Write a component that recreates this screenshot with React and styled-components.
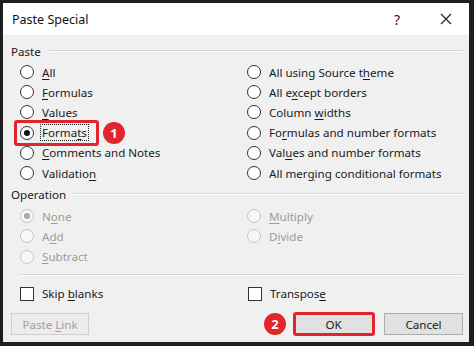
import styled, { createGlobalStyle } from "styled-components";

const GlobalStyle = createGlobalStyle`
  html, body {
    margin: 0;
    padding: 0;
    background: #222;
  }
  * {
    box-sizing: border-box;
  }
`;

const red = "#e0262c";
const uiFont = `"Noto Sans", "Open Sans", Arial, sans-serif`;

const Frame = styled.div`
  width: 474px;
  height: 346px;
  background: #1f1f1f;
  padding: 3px 5px 4px 3px;
`;

const Dialog = styled.div`
  width: 100%;
  height: 100%;
  background: #f0f0f0;
  display: flex;
  flex-direction: column;
  font-family: ${uiFont};
  font-size: 11.6px;
  color: #1a1a1a;
`;

const TitleBar = styled.div`
  height: 32px;
  background: #ffffff;
  display: flex;
  align-items: center;
  padding-left: 9px;
  padding-right: 17px;
`;

const Title = styled.div`
  flex: 1;
  font-size: 12.5px;
  color: #111;
`;

const Help = styled.div`
  font-size: 14px;
  margin-right: 40px;
  color: #222;
`;

const Body = styled.div`
  flex: 1;
  display: flex;
  flex-direction: column;
  padding: 8px 6px 7px 8px;
`;

const GroupHeader = styled.div`
  display: flex;
  align-items: center;
  height: 16px;
  gap: 8px;
  margin-top: ${(p) => p.$top || 0}px;
  margin-bottom: ${(p) => p.$bottom || 0}px;
`;

const Rule = styled.div`
  flex: ${(p) => (p.$standalone ? "none" : 1)};
  height: 2px;
  border-top: 1px solid #d7d7d7;
  border-bottom: 1px solid #ffffff;
  margin-top: ${(p) => p.$top || 0}px;
  margin-left: ${(p) => p.$left || 0}px;
`;

const OptionGrid = styled.div`
  display: grid;
  grid-template-columns: 227px 1fr;
  grid-auto-flow: column;
  grid-template-rows: repeat(${(p) => p.$rows}, 20.2px);
  padding-left: 9px;
`;

const OptionRow = styled.div`
  position: relative;
  display: flex;
  align-items: center;
  gap: 8px;
  color: ${(p) => (p.$disabled ? "#9c9c9c" : "#1a1a1a")};
`;

const RadioCircle = styled.span`
  width: 14px;
  height: 14px;
  border-radius: 50%;
  border: 1px solid ${(p) => (p.$disabled ? "#c4c4c4" : "#333")};
  background: ${(p) => (p.$disabled ? "#f7f7f7" : "#fff")};
  display: flex;
  align-items: center;
  justify-content: center;
  flex-shrink: 0;
  &::after {
    content: "";
    width: 6px;
    height: 6px;
    border-radius: 50%;
    background: ${(p) => (p.$disabled ? "#a8a8a8" : "#111")};
    display: ${(p) => (p.$checked ? "block" : "none")};
  }
`;

const Box = styled.span`
  width: 14px;
  height: 14px;
  border: 1px solid #333;
  background: #fff;
  flex-shrink: 0;
`;

const Label = styled.span`
  padding: 0 1px;
  margin-left: -1px;
  outline: ${(p) => (p.$focus ? "1px dotted #222" : "none")};
  line-height: 15px;
`;

const Key = styled.span`
  text-decoration: underline;
  text-underline-offset: 2px;
`;

const Highlight = styled.div`
  position: absolute;
  left: -6px;
  top: -3px;
  width: 85px;
  height: 26px;
  border: 3px solid ${red};
  border-radius: 3px;
  pointer-events: none;
`;

const Badge = styled.span`
  width: 22px;
  height: 22px;
  border-radius: 50%;
  background: ${red};
  color: #fff;
  font-weight: 700;
  font-size: 13px;
  display: flex;
  align-items: center;
  justify-content: center;
  flex-shrink: 0;
`;

const FloatingBadge = styled(Badge)`
  position: absolute;
  left: 83px;
  top: -1px;
`;

const CheckRow = styled.div`
  display: grid;
  grid-template-columns: 228px 1fr;
  padding-left: 9px;
  margin-top: 8px;
  height: 20px;
`;

const ButtonRow = styled.div`
  display: flex;
  align-items: center;
  margin-top: auto;
`;

const Button = styled.div`
  width: ${(p) => p.$w || 79}px;
  height: 22px;
  display: flex;
  align-items: center;
  justify-content: center;
  background: ${(p) => (p.$disabled ? "#ececec" : "#e1e1e1")};
  border: 1px solid ${(p) => (p.$primary ? "#0078d7" : p.$disabled ? "#cfcfcf" : "#adadad")};
  color: ${(p) => (p.$disabled ? "#a0a0a0" : "#1a1a1a")};
`;

const Spacer = styled.div`
  flex: 1;
`;

const OkWrap = styled.div`
  position: relative;
  margin-left: 8px;
  margin-right: 11px;
`;

const OkHighlight = styled.div`
  position: absolute;
  inset: -1px -2px -1px -1px;
  border: 3px solid ${red};
  border-radius: 3px;
`;

const CloseIcon = () => (
  <svg width="12" height="12" viewBox="0 0 12 12">
    <path d="M1 1 L11 11 M11 1 L1 11" stroke="#222" strokeWidth="1.2" />
  </svg>
);

const Radio = ({ checked, disabled, focus, highlight, children }) => (
  <OptionRow $disabled={disabled}>
    <RadioCircle $checked={checked} $disabled={disabled} />
    <Label $focus={focus}>{children}</Label>
    {highlight && (
      <>
        <Highlight />
        <FloatingBadge>1</FloatingBadge>
      </>
    )}
  </OptionRow>
);

const Check = ({ children }) => (
  <OptionRow>
    <Box />
    <Label>{children}</Label>
  </OptionRow>
);

export default function App() {
  return (
    <>
      <GlobalStyle />
      <Frame>
        <Dialog>
          <TitleBar>
            <Title>Paste Special</Title>
            <Help>?</Help>
            <CloseIcon />
          </TitleBar>
          <Body>
            <GroupHeader $bottom={3}>
              Paste
              <Rule />
            </GroupHeader>
            <OptionGrid $rows={6}>
              <Radio><Key>A</Key>ll</Radio>
              <Radio><Key>F</Key>ormulas</Radio>
              <Radio><Key>V</Key>alues</Radio>
              <Radio checked focus highlight>Forma<Key>t</Key>s</Radio>
              <Radio><Key>C</Key>omments and Notes</Radio>
              <Radio>Validatio<Key>n</Key></Radio>
              <Radio>All using Source t<Key>h</Key>eme</Radio>
              <Radio>All e<Key>x</Key>cept borders</Radio>
              <Radio>Column <Key>w</Key>idths</Radio>
              <Radio>Fo<Key>r</Key>mulas and number formats</Radio>
              <Radio>Val<Key>u</Key>es and number formats</Radio>
              <Radio>All mer<Key>g</Key>ing conditional formats</Radio>
            </OptionGrid>
            <GroupHeader $top={3} $bottom={4}>
              Operation
              <Rule />
            </GroupHeader>
            <OptionGrid $rows={3}>
              <Radio disabled checked>N<Key>o</Key>ne</Radio>
              <Radio disabled>A<Key>d</Key>d</Radio>
              <Radio disabled><Key>S</Key>ubtract</Radio>
              <Radio disabled><Key>M</Key>ultiply</Radio>
              <Radio disabled>D<Key>i</Key>vide</Radio>
            </OptionGrid>
            <Rule $standalone $top={7} $left={9} />
            <CheckRow>
              <Check>Skip <Key>b</Key>lanks</Check>
              <Check>Transpos<Key>e</Key></Check>
            </CheckRow>
            <ButtonRow>
              <Button $w={78} $disabled>
                <span>Paste <Key>L</Key>ink</span>
              </Button>
              <Spacer />
              <Badge>2</Badge>
              <OkWrap>
                <Button $primary>OK</Button>
                <OkHighlight />
              </OkWrap>
              <Button>Cancel</Button>
            </ButtonRow>
          </Body>
        </Dialog>
      </Frame>
    </>
  );
}
